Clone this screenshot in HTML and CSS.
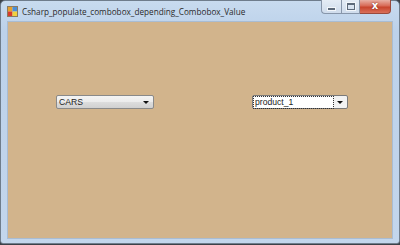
FILE: index.html
```html
<!DOCTYPE html>
<html>
<head>
<meta charset="utf-8">
<link rel="stylesheet" href="styles.css">
</head>
<body>
<div class="window">
  <div class="titlebar">
    <svg class="appicon" width="11" height="11" viewBox="0 0 11 11">
      <rect x="1" y="1" width="4.5" height="4.5" fill="#e8a02a"/>
      <rect x="5.5" y="1" width="4.5" height="4.5" fill="#4a8fd8"/>
      <rect x="1" y="5.5" width="4.5" height="4.5" fill="#d83a2a"/>
      <rect x="5.5" y="5.5" width="4.5" height="4.5" fill="#f0d040"/>
      <rect x="0.5" y="0.5" width="10" height="10" fill="none" stroke="#8a7a60" stroke-width="1"/>
    </svg>
    <span class="title">Csharp_populate_combobox_depending_Combobox_Value</span>
    <div class="caption">
      <div class="cbtn min"><span class="minbar"></span></div>
      <div class="cbtn max"><span class="maxbox"></span></div>
      <div class="cbtn close"><span class="x">x</span></div>
    </div>
  </div>
  <div class="client">
    <div class="combo cars">
      <span class="ctext">CARS</span>
      <span class="arrow"></span>
    </div>
    <div class="combo prod">
      <span class="ctext focus">product_1</span>
      <span class="arrow"></span>
    </div>
  </div>
</div>
</body>
</html>
```
FILE: styles.css
```css
html, body {
  margin: 0;
  padding: 0;
  background: #3c4148;
}
body {
  width: 400px;
  height: 245px;
  overflow: hidden;
  font-family: "Liberation Sans", Arial, sans-serif;
}
.window {
  box-sizing: border-box;
  width: 400px;
  height: 244px;
  border: 1px solid #6f7d8c;
  border-radius: 5px 5px 3px 3px;
  background: linear-gradient(#c8dbef, #bcd1ea 30px, #c3d6ec);
  display: flex;
  flex-direction: column;
  padding: 0 6px 4px 6px;
  position: relative;
}
.titlebar {
  height: 20px;
  display: flex;
  align-items: center;
  position: relative;
}
.appicon {
  margin-left: 0;
  margin-top: 1px;
}
.title {
  font-family: "Open Sans", "Segoe UI", sans-serif;
  font-size: 8.2px;
  color: #2a2a2a;
  margin-left: 4px;
  margin-top: 1px;
}
.caption {
  position: absolute;
  right: 2px;
  top: -1px;
  display: flex;
  height: 14px;
}
.cbtn {
  box-sizing: border-box;
  height: 14px;
  border: 1px solid #8796aa;
  border-top: none;
  display: flex;
  align-items: center;
  justify-content: center;
  background: linear-gradient(#e4ecf5, #cfdcec);
}
.min {
  width: 20px;
  border-radius: 0 0 0 4px;
  border-right: none;
}
.max {
  width: 19px;
}
.close {
  width: 31px;
  border-radius: 0 0 4px 0;
  border-left: none;
  background: linear-gradient(#e8b0a4, #d86a56 45%, #c8452d 55%, #d9705a);
  border-color: #9a4a3d;
}
.minbar {
  width: 7px;
  height: 2px;
  background: #5d6a7a;
  margin-top: 5px;
  border: 1px solid #f2f6fa;
}
.maxbox {
  width: 6px;
  height: 4px;
  border: 1px solid #5d6a7a;
  border-top-width: 2px;
  box-shadow: 0 0 0 1px #f2f6fa;
}
.x {
  color: #ffffff;
  font-family: "DejaVu Sans", sans-serif;
  font-weight: bold;
  font-size: 10px;
  line-height: 10px;
  margin-top: -2px;
  text-shadow: 0 0 2px #6a2015;
}
.client {
  flex: 1;
  background: #d2b48c;
  border: 1px solid #a9bcd2;
  position: relative;
  display: flex;
  align-items: flex-start;
  padding-top: 73px;
}
.combo {
  box-sizing: border-box;
  height: 14px;
  border: 1px solid #8a8a8a;
  border-radius: 2px;
  background: linear-gradient(#f4f4f4, #ebebeb 50%, #dddddd 51%, #d0d0d0);
  display: flex;
  align-items: center;
  font-size: 8.6px;
  color: #222;
}
.cars {
  width: 98px;
  margin-left: 48px;
}
.prod {
  width: 96px;
  margin-left: 98px;
  background: #f2f2f2;
  border-color: #7a7a7a;
}
.ctext {
  flex: 1;
  padding-left: 2px;
  line-height: 11px;
}
.focus {
  flex: 0 0 auto;
  width: 78px;
  margin-left: 1px;
  padding-left: 1px;
  outline: 1px dotted #333;
  background: #ffffff;
  height: 11px;
  line-height: 10px;
}
.arrow {
  width: 0;
  height: 0;
  border-left: 3px solid transparent;
  border-right: 3px solid transparent;
  border-top: 3px solid #111;
  margin: 0 4px 0 auto;
}
```
